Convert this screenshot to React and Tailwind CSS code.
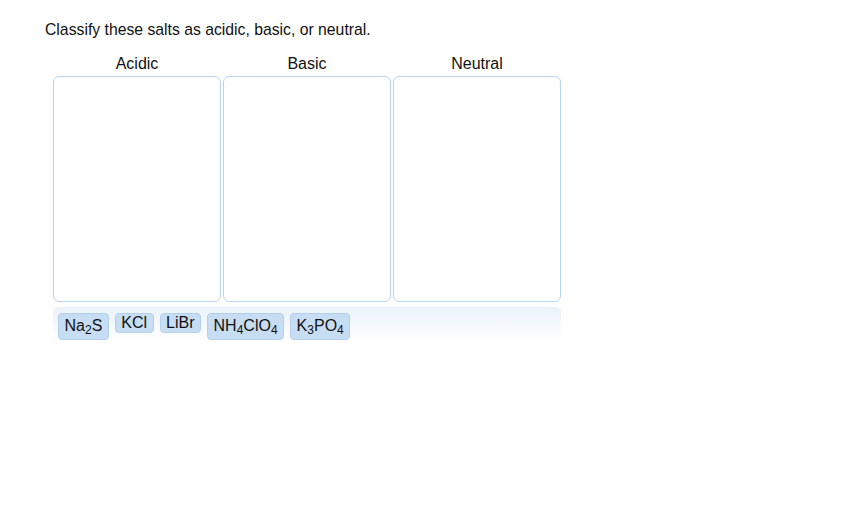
import React from 'react'

const BINS = ['Acidic', 'Basic', 'Neutral']

// each salt: list of [text, isSubscript] pieces
const SALTS = [
  [['Na'], ['2', true], ['S']],
  [['KCl']],
  [['LiBr']],
  [['NH'], ['4', true], ['ClO'], ['4', true]],
  [['K'], ['3', true], ['PO'], ['4', true]],
]

function Chip({ parts }) {
  const hasSub = parts.some((p) => p[1])
  return (
    <div
      className={
        'rounded-[4px] border border-[#b3cfeb] bg-[#c7ddf3] px-[5.5px] text-[16px] leading-[18px] text-[#111] ' +
        (hasSub ? 'pt-[3px] pb-[3px]' : 'py-0')
      }
    >
      {parts.map(([t, sub], i) =>
        sub ? (
          <span key={i} className="relative top-[3px] text-[12px]">{t}</span>
        ) : (
          <span key={i}>{t}</span>
        )
      )}
    </div>
  )
}

export default function App() {
  return (
    <div className="min-h-[509px] w-[862px] bg-white font-['Liberation_Sans',Arial,sans-serif] text-[#111]">
      <div className="pl-[45px] pt-[21px]">
        <p className="text-[15.75px] leading-[18px]">Classify these salts as acidic, basic, or neutral.</p>

        <div className="ml-[8px] mt-[16px] flex w-[508px] gap-[2px]">
          {BINS.map((b) => (
            <div key={b} className="flex flex-1 flex-col">
              <div className="pb-[3px] text-center text-[16px] leading-[18px]">{b}</div>
              <div className="h-[226px] rounded-[6px] border border-[#b9d5f1]" />
            </div>
          ))}
        </div>

        <div className="ml-[8px] mt-[5px] flex w-[508px] items-start gap-[6px] rounded-[5px] bg-gradient-to-b from-[#ebf2fb] to-white pl-[5px] pr-[4px] pt-[6px] pb-[2px]">
          {SALTS.map((s, i) => (
            <Chip key={i} parts={s} />
          ))}
        </div>
      </div>
    </div>
  )
}
